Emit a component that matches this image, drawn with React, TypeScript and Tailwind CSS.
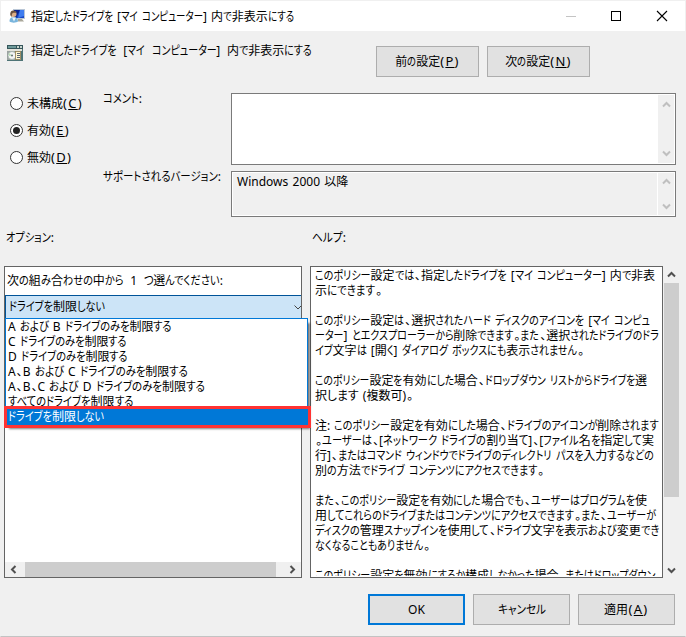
import { useLayoutEffect, useRef, useState, type ReactNode } from "react";
import clsx from "clsx";

const KANA = /([\u3041-\u30ff]+)/;

// 、 and 。 sit in a fixed cell, they are not condensed with the kana
function punctuate(text: string) {
  return text.split(/([、。])/).map((s, i) =>
    i % 2 === 1 ? (
      <span key={i} className="inline-block w-[7px] pl-px">
        {s}
      </span>
    ) : (
      s
    ),
  );
}

// Interface text: kana are condensed so that the line takes the given width,
// kanji and latin keep their normal proportions.
function Txt({ w, children, className, wide }: { w: number; children: string; className?: string; wide?: boolean }) {
  const ref = useRef<HTMLSpanElement>(null);
  const [runs, setRuns] = useState<{ scale: number; widths: number[] } | null>(null);
  const parts = KANA.test(children) ? children.split(KANA) : ["", children];

  useLayoutEffect(() => {
    const widths = Array.from(ref.current!.children).map((el) => (el as HTMLElement).getBoundingClientRect().width);
    const kana = widths.filter((_, i) => i % 2 === 1).reduce((a, b) => a + b, 0);
    const rest = widths.filter((_, i) => i % 2 === 0).reduce((a, b) => a + b, 0);
    setRuns({ scale: (w - rest) / kana, widths });
  }, []);

  return (
    <span ref={ref} className={clsx("inline-block whitespace-pre", className)}>
      {parts.map((part, i) => {
        if (i % 2 === 0)
          return (
            <span key={i} className={wide ? "[word-spacing:3.5px]" : "[word-spacing:1px]"}>
              {punctuate(part)}
            </span>
          );
        return (
          <span
            key={i}
            className="inline-block origin-left"
            style={runs ? { transform: `scaleX(${runs.scale})`, marginRight: (runs.scale - 1) * runs.widths[i] } : undefined}
          >
            {part}
          </span>
        );
      })}
    </span>
  );
}

// Label followed by its access key, e.g. "有効(E)"
function KeyLabel({ text, w, accessKey }: { text: string; w: number; accessKey: string }) {
  return (
    <span className="flex whitespace-pre">
      <Txt w={w}>{text}</Txt>
      <span className="text-[13px] tracking-[1.3px]">
        (<span className="underline underline-offset-1">{accessKey}</span>)
      </span>
    </span>
  );
}

function Chevron({ dir, className }: { dir: "up" | "down" | "left" | "right"; className?: string }) {
  const d = {
    up: "M1 6.5 L4.5 3 L8 6.5",
    down: "M1 2.5 L4.5 6 L8 2.5",
    left: "M6.5 1 L3 4.5 L6.5 8",
    right: "M2.5 1 L6 4.5 L2.5 8",
  }[dir];
  return (
    <svg width="9" height="9" viewBox="0 0 9 9" className={className} fill="none" stroke="currentColor" strokeWidth="2">
      <path d={d} />
    </svg>
  );
}

function Button({ children, className }: { children: ReactNode; className?: string }) {
  return (
    <button className={clsx("flex h-[31px] items-center justify-center bg-[#e1e1e1]", className)}>{children}</button>
  );
}

function Radio({ checked, children }: { checked?: boolean; children: ReactNode }) {
  return (
    <div className="flex h-[27px] items-center gap-1">
      <span className="flex size-[13px] items-center justify-center rounded-full border border-[#333] bg-white">
        {checked && <span className="size-[7px] rounded-full bg-[#222]" />}
      </span>
      {children}
    </div>
  );
}

function DisabledScroll({ className }: { className?: string }) {
  return (
    <div className={clsx("flex w-4 flex-col items-center justify-between bg-[#f0f0f0] text-[#bfbfbf]", className)}>
      <Chevron dir="up" />
      <Chevron dir="down" />
    </div>
  );
}

function UserIcon() {
  return (
    <svg width="17" height="16" viewBox="0 0 17 16">
      <rect x="4.5" y="1.5" width="11" height="9" fill="#1746c4" stroke="#b9c6d6" />
      <path d="M5 2h6L7 10H5z" fill="#0a2490" />
      <path d="M11 2h4v6L9 10z" fill="#3f7df0" />
      <path d="M9 11h4l2 2.500H9z" fill="#a9a79a" />
      <path d="M.5 13.500c0-3.500 2-4.500 4-4.500s4.500 1 4.500 4.500c-2 1.500-6.500 1.500-8.500 0z" fill="#78b4dc" />
      <path d="M3 9.500l2 4 2-4z" fill="#e8f4fb" />
      <circle cx="4.500" cy="6" r="3" fill="#dcae85" />
      <path d="M1.300 7C1 3 3 2 5 2.500c2 .3 2.500 1.500 2.500 2.500C5.500 4.500 3.500 4.500 3 6L2.500 9z" fill="#6b5240" />
    </svg>
  );
}

function PolicyIcon() {
  return (
    <svg width="16" height="16" viewBox="0 0 16 16">
      <rect width="16" height="16" fill="#4f7476" />
      <rect width="16" height="4" fill="#35555a" />
      <rect x="1" y="1" width="8" height="2" fill="#6e9a9a" />
      <rect x="10" y="1" width="2" height="2" fill="#c8d4cc" />
      <rect x="13" y="1" width="2" height="2" fill="#c8d4cc" />
      <rect y="4" width="15" height="2" fill="#e4e4dc" />
      <rect y="6" width="14" height="9" fill="#9aa3a0" />
      <circle cx="5" cy="10.5" r="4" fill="#f4f4f4" stroke="#9caaa4" strokeWidth=".7" />
      <path d="M5 10.5L2 8v3z" fill="#b8dfb4" />
      <circle cx="5" cy="10.5" r="1" fill="#65716d" />
      <rect x="8.5" y="6.5" width="5" height="8" fill="#fff6d2" stroke="#927e50" strokeWidth=".8" />
      <path d="M10 8.5h3M10 10.5h3M10 12.5h3" stroke="#4b5568" strokeWidth=".9" />
    </svg>
  );
}

const options: [string, number][] = [
  ["A および B ドライブのみを制限する", 164],
  ["C ドライブのみを制限する", 119],
  ["D ドライブのみを制限する", 120],
  ["A、B および C ドライブのみを制限する", 180],
  ["A、B、C および D ドライブのみを制限する", 197],
  ["すべてのドライブを制限する", 125],
];

const help: [string, number][] = [
  ["このポリシー設定では、指定したドライブを [マイ コンピューター] 内で非表", 340],
  ["示にできます。", 67],
  ["", 0],
  ["このポリシー設定は、選択されたハード ディスクのアイコンを [マイ コンピュ", 335],
  ["ーター] とエクスプローラーから削除できます。また、選択されたドライブのドラ", 344],
  ["イブ文字は [開く] ダイアログ ボックスにも表示されません。", 269],
  ["", 0],
  ["このポリシー設定を有効にした場合、ドロップダウン リストからドライブを選", 332],
  ["択します (複数可)。", 98],
  ["", 0],
  ["注: このポリシー設定を有効にした場合、ドライブのアイコンが削除されます", 344],
  ["。ユーザーは、[ネットワーク ドライブの割り当て]、[ファイル名を指定して実", 339],
  ["行]、またはコマンド ウィンドウでドライブのディレクトリ パスを入力するなどの", 339],
  ["別の方法でドライブ コンテンツにアクセスできます。", 229],
  ["", 0],
  ["また、このポリシー設定を有効にした場合でも、ユーザーはプログラムを使", 332],
  ["用してこれらのドライブまたはコンテンツにアクセスできます。また、ユーザーが", 341],
  ["ディスクの管理スナップインを使用して、ドライブ文字を表示および変更でき", 344],
  ["なくなることもありません。", 115],
  ["", 0],
  ["このポリシー設定を無効にするか構成しなかった場合、またはドロップダウン", 341],
];

export default function App() {
  return (
    <div className="flex h-[637px] w-[686px] flex-col overflow-hidden border border-[#f0f0f0] border-b-[#c3c3c3] bg-[#f0f0f0] font-['Noto_Sans','Noto_Sans_CJK_JP',sans-serif] text-[12px] leading-[15px] text-black [font-feature-settings:'palt']">
      <header className="flex h-[30px] shrink-0 items-center bg-white pl-2">
        <UserIcon />
        <Txt w={263} className="ml-[5px]">
          指定したドライブを [マイ コンピューター] 内で非表示にする
        </Txt>
        <svg width="102" height="12" viewBox="0 0 102 12" className="mr-[17px] ml-auto" fill="none" stroke="#000">
          <path d="M0 6.5h10" stroke="#c4c4c4" />
          <rect x="45.5" y="1.5" width="9" height="9" />
          <path d="M91 1l10 10M101 1L91 11" strokeWidth="1.1" />
        </svg>
      </header>

      <div className="flex h-[62px] shrink-0 pt-[15px] pl-[6px]">
        <div className="mt-[-1px] w-[24px]">
          <PolicyIcon />
        </div>
        <Txt w={281} wide className="mt-[-3px] w-[345px]">
          指定したドライブを [マイ コンピューター] 内で非表示にする
        </Txt>
        <div className="flex gap-2">
          <Button className="w-[103px] border border-[#adadad]">
            <KeyLabel text="前の設定" w={45} accessKey="P" />
          </Button>
          <Button className="w-[103px] border border-[#adadad]">
            <KeyLabel text="次の設定" w={45} accessKey="N" />
          </Button>
        </div>
      </div>

      <div className="flex h-[137px] shrink-0 pl-[9px]">
        <div className="w-[93px]">
          <div className="mt-[-3px]">
            <Radio>
              <KeyLabel text="未構成" w={36} accessKey="C" />
            </Radio>
            <Radio checked>
              <KeyLabel text="有効" w={24} accessKey="E" />
            </Radio>
            <Radio>
              <KeyLabel text="無効" w={24} accessKey="D" />
            </Radio>
          </div>
        </div>
        <div className="flex w-[128px] flex-col items-start gap-[63px]">
          <Txt w={39} className="mt-[-2px]">
            コメント:
          </Txt>
          <Txt w={118}>サポートされるバージョン:</Txt>
        </div>
        <div className="flex flex-col gap-[6px]">
          <div className="flex h-[72px] w-[445px] justify-end border border-[#7a7a7a] bg-white p-px">
            <DisabledScroll className="py-[5px]" />
          </div>
          <div className="flex h-[46px] w-[445px] justify-between gap-px border border-[#7a7a7a] bg-white p-px">
            <div className="flex-1 bg-[#f0f0f0] pt-[1px] pl-1 [word-spacing:1.2px]">Windows 2000 以降</div>
            <DisabledScroll className="py-1" />
          </div>
        </div>
      </div>

      <div className="flex h-[36px] shrink-0 pl-[5px]">
        <Txt w={48} className="w-[306px]">
          オプション:
        </Txt>
        <Txt w={34}>ヘルプ:</Txt>
      </div>

      <main className="flex h-[312px] shrink-0 pl-[3px]">
        <section className="relative mr-2 flex w-[298px] flex-col border border-[#646464] bg-white">
          <div className="h-[28px] pt-[6px] pl-[2px]">
            <Txt w={216} wide>
              次の組み合わせの中から 1 つ選んでください:
            </Txt>
          </div>
          <div className="flex h-[24px] items-center justify-between border-y border-l border-[#005499] bg-[#cce4f7] pl-[3px]">
            <Txt w={96} className="mt-[-2px]">
              ドライブを制限しない
            </Txt>
            <svg width="7" height="5" viewBox="0 0 7 5" fill="none" stroke="#444">
              <path d="M.5 .5L4 4L7 1" />
            </svg>
          </div>
          <div className="mt-auto flex h-[15px] items-center bg-[#f0f0f0] pr-1 pl-[4px] text-[#505050]">
            <Chevron dir="left" />
            <span className="ml-[7px] h-full w-[251px] bg-[#cdcdcd]" />
            <Chevron dir="right" className="ml-auto" />
          </div>

          {/* open drop-down list */}
          <div className="absolute top-[51px] left-0 z-10 w-[303px] border border-[#0078d7] bg-white pb-4 shadow-[3px_4px_2px_-1px_rgba(0,0,0,0.5)]">
            {options.map(([label, w]) => (
              <div key={label} className="h-[15px] pl-[2px]">
                <Txt w={w}>{label}</Txt>
              </div>
            ))}
          </div>
          <div className="absolute top-[139px] left-[-1px] z-20 h-[22px] w-[307px] border-[3px] border-[#ff3333] bg-[#0078d7] pl-px text-white">
            <Txt w={96}>ドライブを制限しない</Txt>
          </div>
        </section>

        <section className="w-[353px] overflow-hidden border border-[#646464] bg-white pt-[1px] pl-[4px]">
          <div className="h-[308px] overflow-hidden">
            {help.map(([line, w], i) => (
              <div key={i} className="h-[15px]">
                {line && <Txt w={w}>{line}</Txt>}
              </div>
            ))}
          </div>
        </section>
        <div className="ml-px flex w-[15px] flex-col items-center pt-[4px] pb-[3px] text-[#505050]">
          <Chevron dir="up" />
          <span className="mt-[4px] h-[214px] w-full bg-[#cdcdcd]" />
          <Chevron dir="down" className="mt-auto" />
        </div>
      </main>

      <footer className="flex gap-2 pt-4 pl-[367px]">
        <Button className="w-[97px] border-2 border-[#0078d7]">OK</Button>
        <Button className="w-[97px] border border-[#adadad]">
          <Txt w={48}>キャンセル</Txt>
        </Button>
        <Button className="w-[97px] border border-[#adadad]">
          <KeyLabel text="適用" w={24} accessKey="A" />
        </Button>
      </footer>
    </div>
  );
}
